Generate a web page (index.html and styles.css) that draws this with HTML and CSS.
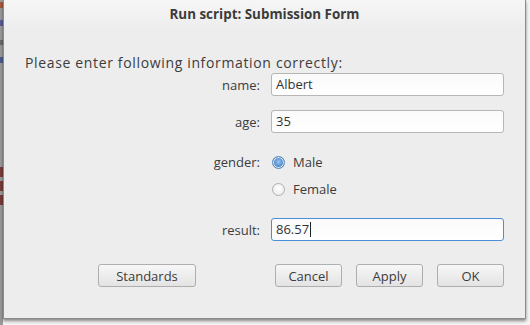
FILE: index.html
```html
<!DOCTYPE html>
<html>
<head>
<meta charset="utf-8">
<link rel="stylesheet" href="styles.css">
</head>
<body>
<div class="screen">
  <div class="behind">
    <span class="mark m1"></span>
    <span class="mark m2"></span>
    <span class="mark m3"></span>
    <span class="mark m4"></span>
    <span class="mark m5"></span>
    <span class="mark m6"></span>
    <span class="mark m7"></span>
  </div>
  <div class="dialog">
    <div class="titlebar">Run script: Submission Form</div>
    <div class="intro">Please enter following information correctly:</div>
    <div class="form">
      <label class="lbl">name:</label>
      <div class="input">Albert</div>
      <label class="lbl r-age">age:</label>
      <div class="input r-age">35</div>
      <label class="lbl lbl-top r-gender">gender:</label>
      <div class="radios r-gender">
        <div class="radio-row"><span class="radio checked"></span><span>Male</span></div>
        <div class="radio-row"><span class="radio"></span><span>Female</span></div>
      </div>
      <label class="lbl r-result">result:</label>
      <div class="input focused r-result">86.57<span class="caret"></span></div>
    </div>
    <div class="buttons">
      <button class="btn btn-std">Standards</button>
      <div class="spacer"></div>
      <button class="btn">Cancel</button>
      <button class="btn">Apply</button>
      <button class="btn">OK</button>
    </div>
  </div>
</div>
</body>
</html>
```
FILE: styles.css
```css
html, body {
  margin: 0;
  padding: 0;
  width: 530px;
  height: 325px;
  overflow: hidden;
  background: #f4f4f4;
  font-family: "Open Sans", "DejaVu Sans", sans-serif;
  font-size: 13px;
  color: #3c3c3c;
}
.screen {
  display: flex;
  height: 325px;
}
.behind {
  width: 3px;
  height: 325px;
  background: #9a9a9a;
  display: flex;
  flex-direction: column;
}
.mark { display: block; width: 3px; }
.m1 { height: 6px; margin-top: 2px; background: #a35a3a; }
.m2 { height: 6px; margin-top: 12px; background: #5a5a9a; }
.m3 { height: 5px; margin-top: 14px; background: #6a6a6a; }
.m4 { height: 6px; margin-top: 12px; background: #4a5a8a; }
.m5 { height: 10px; margin-top: 104px; background: #7a3a3a; }
.m6 { height: 10px; margin-top: 4px; background: #7a3a3a; }
.m7 { height: 10px; margin-top: 4px; background: #7a3a3a; }
.dialog {
  width: 521px;
  height: 318px;
  border: 1px solid #8c8c8c;
  border-top: none;
  background: #ededed;
  box-shadow: 0 2px 3px rgba(0,0,0,0.45);
  display: flex;
  flex-direction: column;
}
.titlebar {
  height: 29px;
  line-height: 28px;
  text-align: center;
  font-weight: bold;
  font-size: 13.4px;
  color: #3c3c3c;
  background: linear-gradient(#f6f6f6, #ededed);
}
.intro {
  margin-top: 26px;
  margin-left: 21px;
  line-height: 16px;
  height: 16px;
  font-size: 14px;
  letter-spacing: 0.65px;
}
.form {
  margin-top: 2px;
  display: grid;
  grid-template-columns: 256px 233px;
  column-gap: 11px;
  align-items: center;
}
.lbl {
  text-align: right;
  line-height: 16px;
}
.lbl-top { align-self: start; }
.r-age { margin-top: 14px; }
.r-gender { margin-top: 20px; }
.r-result { margin-top: 20px; }
.lbl.r-gender { margin-top: 21px; }
.input {
  box-sizing: border-box;
  height: 23px;
  border: 1px solid #b6b6b6;
  border-radius: 3px;
  background: linear-gradient(#fafafa, #ffffff);
  padding-left: 4px;
  line-height: 21px;
  color: #333;
  display: flex;
  align-items: center;
}
.input.focused { border-color: #4a90d9; }
.caret {
  display: inline-block;
  width: 1px;
  height: 15px;
  background: #222;
  margin-left: 1px;
}
.radios {
  display: flex;
  flex-direction: column;
  gap: 9px;
}
.radio-row {
  display: flex;
  align-items: center;
  height: 18px;
  padding-left: 1px;
  gap: 8px;
}
.radio {
  box-sizing: border-box;
  width: 13px;
  height: 13px;
  border-radius: 50%;
  border: 1px solid #b0b0b0;
  background: radial-gradient(circle at 50% 40%, #ffffff 0%, #e6e6e6 100%);
}
.radio.checked {
  border-color: #5a86b5;
  background: radial-gradient(circle at 50% 45%, #9cc6f0 0%, #4f8ed0 55%, #3f78b8 100%);
  box-shadow: inset 0 0 0 1px #dbe9f8;
}
.buttons {
  margin-top: 23px;
  display: flex;
  gap: 14px;
  padding-right: 21px;
}
.spacer { flex: 1; }
.btn {
  box-sizing: border-box;
  height: 23px;
  width: 67px;
  border: 1px solid #aeaeae;
  border-radius: 3px;
  background: linear-gradient(#f7f7f7, #e3e3e3);
  font-family: inherit;
  font-size: 13px;
  color: #3c3c3c;
  padding: 0;
}
.btn-std {
  width: 98px;
  margin-left: 94px;
}
```
